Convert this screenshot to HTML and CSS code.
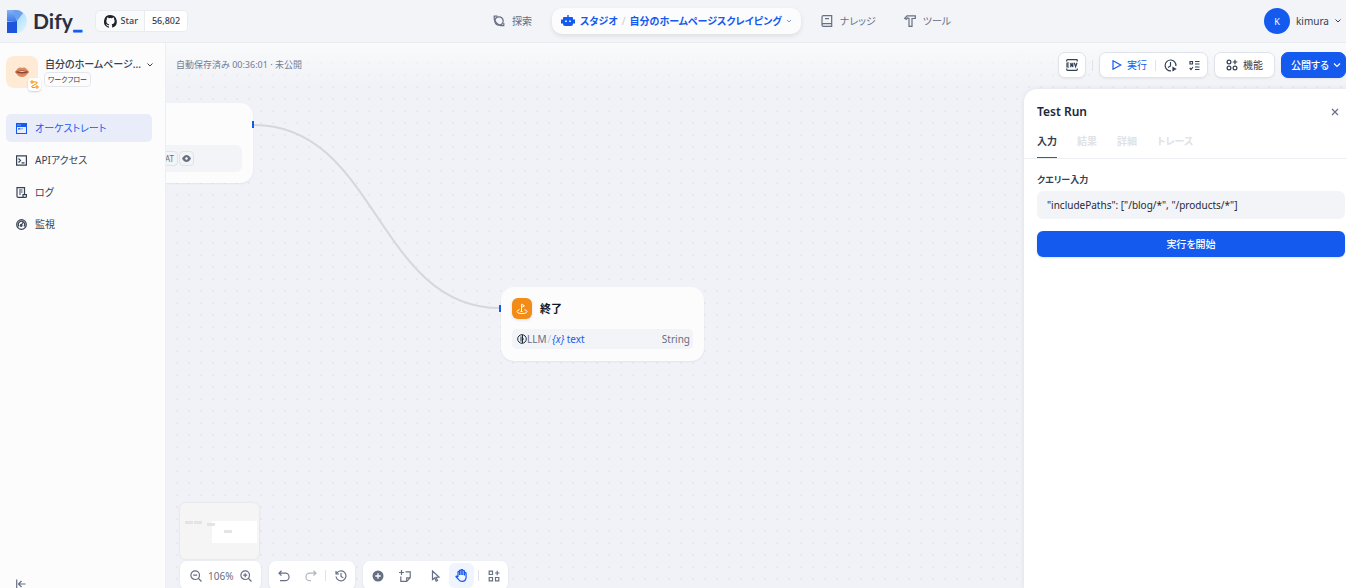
FILE: index.html
```html
<!DOCTYPE html>
<html lang="ja">
<head>
  <meta charset="UTF-8">
  <meta name="viewport" content="width=device-width, initial-scale=1">
  <title>自分のホームページスクレイピング - Dify</title>
  <link rel="stylesheet" href="styles.css">
</head>
<body>
  <header class="header">
    <div class="brand">
      <a class="logo" href="#">
        <svg width="21" height="24" viewBox="0 0 21 24">
          <defs>
            <linearGradient id="bar" x1="0" y1="0" x2="0" y2="1">
              <stop offset="0" stop-color="#86b4f5"/><stop offset="1" stop-color="#3f7ae8"/>
            </linearGradient>
            <linearGradient id="bowl" x1="0" y1="0" x2="1" y2="1">
              <stop offset="0" stop-color="#5f93ee"/><stop offset=".5" stop-color="#b5e3fb"/><stop offset="1" stop-color="#e8f7fc"/>
            </linearGradient>
          </defs>
          <path d="M0 1h9a11 11.500 0 0 1 0 23H0z" fill="url(#bowl)"/>
          <path d="M0 1h6l4 11H0z" fill="url(#bar)"/>
          <path d="M6 1h3q4 0 7 3l-6 8z" fill="#6a9ff0"/>
          <path d="M0 13l10-1v12H0z" fill="#1c55dc"/>
        </svg>
        <span class="logo-text">Dify<b>_</b></span>
      </a>
      <a class="github" href="#">
        <span class="github-star">
          <svg width="13" height="13" viewBox="0 0 16 16" fill="#1f2329"><path d="M8 0a8 8 0 0 0-2.500 15.600c.4.100.5-.2.500-.4v-1.500c-2.200.5-2.700-1-2.700-1-.4-.9-.9-1.200-.9-1.200-.7-.5.1-.5.1-.5.8.1 1.200.8 1.200.8.7 1.200 1.900.9 2.300.7.1-.5.3-.9.500-1.100-1.800-.2-3.600-.9-3.600-4 0-.9.300-1.600.8-2.100-.1-.2-.4-1 .1-2.100 0 0 .7-.2 2.200.8a7.500 7.500 0 0 1 4 0c1.500-1 2.200-.8 2.200-.8.4 1.100.2 1.900.1 2.100.5.600.8 1.300.8 2.100 0 3.100-1.900 3.800-3.700 4 .3.300.6.800.6 1.500v2.200c0 .2.100.5.500.4A8 8 0 0 0 8 0z"/></svg>
          Star
        </span>
        <span class="github-count">56,802</span>
      </a>
    </div>

    <nav class="main-nav">
      <a class="nav-item" href="#">
        <svg class="icon" width="12" height="12" viewBox="0 0 12 12"><circle cx="6" cy="6" r="4.200"/><path d="M4.500 1.200H1.200V4Q2.500 8.500 7.800 10.700h3V8"/></svg>
        探索
      </a>
      <div class="nav-pill">
        <a class="nav-link" href="#">
          <svg width="14" height="12" viewBox="0 0 14 12" fill="#155aef"><path d="M6.300 0h1.400v2H11q1 0 1 1v1.500h2v4h-2V9q0 2-2 2H4q-2 0-2-2v-.5H0v-4h2V3q0-1 1-1h3.300z"/><path d="M4.200 5.500h1.600V7H4.200zM8.200 5.500h1.600V7H8.200z" fill="#fff"/></svg>
          スタジオ
        </a>
        <span class="slash">/</span>
        <button class="app-switch" type="button">自分のホームページスクレイピング
          <svg class="icon" width="6" height="6" viewBox="0 0 6 6"><path d="M1 2l2 2 2-2"/></svg>
        </button>
      </div>
      <a class="nav-item" href="#">
        <svg class="icon" width="12" height="12" viewBox="0 0 12 12"><path d="M1 10V2q0-1.400 1.400-1.400h8.300v10.800H2.400Q1 11.400 1 10t1.400-1.400h8.300M4 3.700h4"/></svg>
        ナレッジ
      </a>
      <a class="nav-item" href="#">
        <svg class="icon" width="12" height="12" viewBox="0 0 12 12"><path d="M.7 3.500L3 .8h8.300v2.700H8v7.800H5V3.500L3.500 3 2.300 4.200z"/></svg>
        ツール
      </a>
    </nav>

    <button class="user" type="button">
      <span class="avatar">K</span>
      kimura
      <svg class="icon" width="6" height="6" viewBox="0 0 6 6"><path d="M.5 1.500L3 4l2.500-2.500"/></svg>
    </button>
  </header>

  <div class="layout">
    <aside class="sidebar">
      <div class="app">
        <div class="app-icon">
          <svg width="16" height="12" viewBox="0 0 16 12"><path d="M1 6Q4 1 6.500 1.500q1.500.8 3 0Q12 1 15 6q-3 5-7 5T1 6z" fill="#dd8a60"/><path d="M1 6q4-2 7-1.500Q11 4 15 6q-4 1.500-7 1.500T1 6z" fill="#8a463c"/><path d="M3.500 5.500q4.500-1.200 9 0-4.500.8-9 0z" fill="#e8e4e8"/></svg>
          <span class="app-badge">
            <svg width="9" height="9" viewBox="0 0 9 9" fill="none" stroke="#f79009"><path d="M1 1h2v2H1zM6 6h2v2H6zM3 2h3q2 0 1 1.500L2 6q-1 1.500 1 1.500h2"/></svg>
          </span>
        </div>
        <div class="app-info">
          <div class="app-name">自分のホームページ...</div>
          <span class="app-type">ワークフロー</span>
        </div>
        <svg class="icon app-arrow" width="6" height="6" viewBox="0 0 6 6"><path d="M.5 1.500L3 4l2.500-2.500"/></svg>
      </div>

      <nav class="side-nav">
        <a class="side-link active" href="#">
          <svg width="11" height="11" viewBox="0 0 11 11"><path fill="#155aef" fill-rule="evenodd" d="M0 0h11v11H0zM1 4v6h9V4zM1.500 1.500v1h1v-1zM3.500 1.500v1h1v-1z"/><path fill="#155aef" d="M2 5.200h2.500v1.200H2zM5.500 5.200h1v1h-1z"/></svg>
          オーケストレート
        </a>
        <a class="side-link" href="#">
          <svg class="icon" width="11" height="11" viewBox="0 0 11 11"><path d="M.6.8h9.800v9.400H.6zM2.500 3.500l2 2-2 2M5.500 7.800h3"/></svg>
          APIアクセス
        </a>
        <a class="side-link" href="#">
          <svg class="icon" width="11" height="11" viewBox="0 0 11 11"><path d="M1 .6h7.500v7h2v1.600q0 1.200-1.200 1.200H2.200Q1 10.400 1 9.200zM8.500 7.600H7v1.600q0 1.200 1.200 1.200M3 3h3.500M3 5h3.500M3 7h2"/></svg>
          ログ
        </a>
        <a class="side-link" href="#">
          <svg class="icon" width="11" height="11" viewBox="0 0 11 11"><circle cx="5.500" cy="5.500" r="4.800"/><path d="M3 7.500a3.200 3.200 0 1 1 5 0M5 6.500l2-3"/><circle cx="5.200" cy="6.500" r=".8"/></svg>
          監視
        </a>
      </nav>

      <button class="collapse" type="button" aria-label="サイドバーを閉じる">
        <svg class="icon" width="10" height="10" viewBox="0 0 10 10"><path d="M.7.500v9M9.500 5H2.500M5.500 2l-3 3 3 3"/></svg>
      </button>
    </aside>

    <main class="canvas">
      <svg class="edges" width="100%" height="100%"><path d="M88 82C211 82 211 265 334 265"/></svg>

      <section class="node node-llm">
        <div class="model">
          <span class="tag">CHAT</span>
          <span class="tag tag-icon"><svg width="9" height="7" viewBox="0 0 9 7"><path d="M0 3.500Q2 0 4.500 0T9 3.500Q7 7 4.500 7T0 3.500z" fill="#676f83"/><circle cx="4.500" cy="3.500" r="1.200" fill="#fff"/></svg></span>
        </div>
        <i class="port port-out"></i>
      </section>

      <section class="node node-end">
        <i class="port port-in"></i>
        <div class="node-title">
          <span class="node-icon">
            <svg width="12" height="12" viewBox="0 0 12 12" fill="none" stroke="#fff"><path d="M5.500 8.500V1.200l3 1.600-3 1.700M3.500 6.600Q1 7.200 1 8.600q0 2 5 2t5-2q0-1.400-2.700-2"/><path d="M4.500 8.500h2"/></svg>
          </span>
          終了
        </div>
        <div class="variable">
          <svg width="10" height="10" viewBox="0 0 10 10" fill="none" stroke="#1d2939"><circle cx="5" cy="5" r="4.300"/><path d="M4 2.500v5M5.500 1v8M5.500 5H7"/></svg>
          <span>LLM</span><span class="slash">/</span>
          <span class="var-name"><i>{x}</i> text</span>
          <span class="var-type">String</span>
        </div>
      </section>

      <div class="top-bar">
        <span class="saved">自動保存済み 00:36:01 · 未公開</span>
        <div class="actions">
          <button class="btn btn-env" type="button" aria-label="環境変数">
            <svg class="icon" width="12" height="12" viewBox="0 0 12 12"><path d="M.7 2.500V1.500Q.7.700 1.500.7h9q.8 0 .8.800v1M.7 9.500v1q0 .8.800.8h9q.8 0 .8-.8v-1M3.200 4H1v4h2.200M1 6h2M4.800 8.300V4l2 4V3.700M8.300 3.700l1.300 4 1.400-4"/></svg>
          </button>
          <span class="divider"></span>
          <div class="btn-group">
            <button class="run" type="button">
              <svg class="icon" width="10" height="10" viewBox="0 0 10 10"><path d="M1 .8v8.400L8.800 5z"/></svg>
              実行
            </button>
            <span class="divider"></span>
            <button class="icon-btn" type="button" aria-label="実行履歴">
              <svg class="icon" width="13" height="13" viewBox="0 0 13 13"><path d="M7 11.800A5.400 5.400 0 1 1 11.900 7M6.500 3v4L4 8.500"/><path d="M9 8.500v3l2.500-1.500z" fill="currentColor"/></svg>
            </button>
            <button class="icon-btn" type="button" aria-label="チェックリスト">
              <svg class="icon" width="11" height="11" viewBox="0 0 11 11"><path d="M1 1.500h2.500V4H1zM6 1.500h4.500M6 4h4.500M.7 8l1.300 1.500L4 7M6 7h4.500M6 9.500h4.500"/></svg>
            </button>
          </div>
          <button class="btn" type="button">
            <svg class="icon" width="12" height="12" viewBox="0 0 12 12"><circle cx="3" cy="3" r="1.900"/><circle cx="3" cy="9" r="1.900"/><circle cx="9" cy="9" r="1.900"/><path d="M9 .7v4.600M6.700 3h4.600"/></svg>
            機能
          </button>
          <button class="btn btn-primary" type="button">公開する
            <svg class="icon" width="8" height="8" viewBox="0 0 8 8"><path d="M1 2.500l3 3 3-3"/></svg>
          </button>
        </div>
      </div>

      <section class="panel">
        <div class="panel-head">
          <h2>Test Run</h2>
          <button class="icon-btn" type="button" aria-label="閉じる">
            <svg class="icon" width="8" height="8" viewBox="0 0 8 8"><path d="M1 1l6 6M7 1L1 7"/></svg>
          </button>
        </div>
        <div class="tabs">
          <button class="tab active" type="button">入力</button>
          <button class="tab" type="button" disabled>結果</button>
          <button class="tab" type="button" disabled>詳細</button>
          <button class="tab" type="button" disabled>トレース</button>
        </div>
        <form class="run-form">
          <label for="query">クエリー入力</label>
          <input id="query" type="text" value='"includePaths": ["/blog/*", "/products/*"]'>
          <button class="start" type="button">実行を開始</button>
        </form>
      </section>

      <div class="controls">
        <div class="zoom-col">
          <svg class="minimap" width="79" height="56" viewBox="0 0 79 56">
            <path d="M32 18h45v22H32z" fill="#fff"/>
            <path d="M5 18h8v3H5zM14 18h8v3h-8zM27 20h8v3h-8zM44 27h8v3h-8z" fill="#e4e4e7"/>
          </svg>
          <div class="tools zoom">
            <button class="icon-btn" type="button" aria-label="縮小">
              <svg class="icon" width="12" height="12" viewBox="0 0 12 12"><circle cx="5.200" cy="5.200" r="4.300"/><path d="M8.500 8.500l3 3M3.200 5.200h4"/></svg>
            </button>
            <span>106%</span>
            <button class="icon-btn" type="button" aria-label="拡大">
              <svg class="icon" width="12" height="12" viewBox="0 0 12 12"><circle cx="5.200" cy="5.200" r="4.300"/><path d="M8.500 8.500l3 3M3.200 5.200h4M5.200 3.200v4"/></svg>
            </button>
          </div>
        </div>
        <div class="tools">
          <button class="icon-btn" type="button" aria-label="元に戻す">
            <svg class="icon" width="12" height="12" viewBox="0 0 12 12"><path d="M3.500.800L1 3.200l2.500 2.500M1 3.200h6.300a3.700 3.700 0 0 1 0 7.500H2"/></svg>
          </button>
          <button class="icon-btn faded" type="button" aria-label="やり直し">
            <svg class="icon" width="12" height="12" viewBox="0 0 12 12"><path d="M8.500.800L11 3.200 8.500 5.700M11 3.200H4.700a3.700 3.700 0 0 0 0 7.500H6"/></svg>
          </button>
          <span class="divider"></span>
          <button class="icon-btn" type="button" aria-label="変更履歴">
            <svg class="icon" width="12" height="12" viewBox="0 0 12 12"><path d="M1 1v3h3M1.300 4A5 5 0 1 1 1 6.500M6 3v3.500l2.300 1.200"/></svg>
          </button>
        </div>
        <div class="tools">
          <button class="icon-btn" type="button" aria-label="ノードを追加">
            <svg width="12" height="12" viewBox="0 0 12 12"><circle cx="6" cy="6" r="5.500" fill="#676f83"/><path d="M6 3.300v5.400M3.300 6h5.400" stroke="#fff" stroke-width="1.300"/></svg>
          </button>
          <button class="icon-btn" type="button" aria-label="メモを追加">
            <svg class="icon" width="12" height="12" viewBox="0 0 12 12"><path d="M2.500 0v5M0 2.500h5M6.500 1.800h4.700v6l-3.500 3.500H1.800V6.500M7.700 11.300V7.800h3.500"/></svg>
          </button>
          <div class="modes">
            <button class="icon-btn" type="button" aria-label="ポインターモード">
              <svg class="icon" width="12" height="12" viewBox="0 0 12 12"><path d="M3.500 1l6.500 6-3 .3 1.500 3.200-1.300.7-1.500-3.300-2.200 1.600z"/></svg>
            </button>
            <button class="icon-btn selected" type="button" aria-label="ハンドモード">
              <svg class="icon" width="13" height="13" viewBox="0 0 13 13"><path d="M3 8V3.200q0-.8.800-.8t.8.800V6 1.800Q4.600 1 5.400 1t.8.800V6 1.300q0-.8.800-.8t.8.800V6 2.300q0-.8.900-.8t.8.800V6.500 4.500q0-.8.800-.8t.8.800V8q0 4.300-4 4.300-2.300 0-3.300-1.600L1 7.700q.2-1.400 2 .3"/></svg>
            </button>
          </div>
          <span class="divider"></span>
          <button class="icon-btn" type="button" aria-label="ノードを整理">
            <svg class="icon" width="12" height="12" viewBox="0 0 12 12"><path d="M1.200 1.200h3.300v3.300H1.200zM1.200 7.500h3.300v3.300H1.200zM7.500 7.500h3.300v3.300H7.500zM9.200.700v4.600M7 3h4.500"/></svg>
          </button>
        </div>
      </div>
    </main>
  </div>
</body>
</html>
```

FILE: styles.css
```css
* {
  box-sizing: border-box;
}

body {
  margin: 0;
  height: 100vh;
  display: flex;
  flex-direction: column;
  overflow: hidden;
  background: #f2f4f7;
  color: #354052;
  font-family: "Noto Sans", "Noto Sans CJK JP", sans-serif;
  font-size: 10px;
  line-height: 16px;
  font-feature-settings: "palt";
}

a {
  color: inherit;
  text-decoration: none;
}

button {
  display: flex;
  align-items: center;
  justify-content: center;
  padding: 0;
  border: none;
  background: none;
  color: inherit;
  font: inherit;
  font-feature-settings: inherit;
  white-space: nowrap;
  cursor: pointer;
}

svg {
  flex: none;
}

.icon {
  fill: none;
  stroke: currentColor;
  stroke-width: 1.2;
}

/* header */
.header {
  display: flex;
  align-items: center;
  justify-content: space-between;
  height: 43px;
  padding: 0 5px 0 7px;
  border-bottom: 1px solid #eaecf0;
}

.brand,
.logo,
.github,
.github-star,
.main-nav,
.nav-item,
.nav-pill,
.nav-link {
  display: flex;
  align-items: center;
}

.brand {
  gap: 12px;
}

.logo {
  gap: 5px;
}

.logo-text {
  color: #2b2f42;
  font-family: Lato, sans-serif;
  font-size: 21px;
  font-weight: 700;
  line-height: 24px;
}

.logo-text b {
  color: #155aef;
  font-weight: 900;
  -webkit-text-stroke: 1px #155aef;
}

.github {
  height: 22px;
  border: 1px solid #e9ebf0;
  border-radius: 5px;
  background: #f9fafb;
  font-size: 9px;
  font-weight: 500;
  overflow: hidden;
}

.github-star {
  gap: 4px;
  padding: 0 6px 0 8px;
}

.github-count {
  padding: 2px 7px;
  border-left: 1px solid #e9ebf0;
  background: #fff;
}

.main-nav {
  gap: 20px;
  margin-right: 8px;
  color: #676f83;
}

.nav-item {
  gap: 7px;
}

.nav-item:last-child {
  margin-left: 8px;
}

.nav-pill {
  height: 26px;
  padding: 0 9px;
  border-radius: 10px;
  background: #fcfcfd;
  box-shadow: 0 2px 5px #10182818;
  color: #155aef;
  font-weight: 600;
}

.nav-link {
  gap: 5px;
}

.slash {
  margin: 0 4px;
  color: #c4c9d4;
  font-weight: 400;
}

.app-switch {
  gap: 4px;
}

.nav-pill .icon,
.user .icon,
.app-arrow {
  stroke-width: 1;
}

.nav-pill .icon {
  opacity: .6;
}

.user {
  gap: 6px;
}

.avatar {
  width: 26px;
  height: 26px;
  border-radius: 50%;
  background: #155aef;
  color: #fff;
  font-size: 9px;
  line-height: 28px;
}

/* sidebar */
.layout {
  display: flex;
  flex: 1;
  min-height: 0;
}

.sidebar {
  display: flex;
  flex-direction: column;
  flex: none;
  width: 166px;
  padding: 13px 13px 0 6px;
  border-right: 1px solid #eceef2;
  background: #fcfcfd;
}

.app {
  display: flex;
  gap: 6px;
}

.app-icon {
  position: relative;
  display: flex;
  flex: none;
  align-items: center;
  justify-content: center;
  width: 32px;
  height: 32px;
  border-radius: 8px;
  background: #ffead5;
}

.app-badge {
  position: absolute;
  right: -3px;
  bottom: -3px;
  display: flex;
  padding: 2px;
  border-radius: 4px;
  background: #fff;
  box-shadow: 0 1px 2px #10182830;
}

.app-name {
  padding-left: 1px;
  font-weight: 500;
  white-space: nowrap;
}

.app-type {
  display: block;
  width: fit-content;
  padding: 0 3px;
  border: 1px solid #e4e7ec;
  border-radius: 4px;
  font-size: 7px;
  line-height: 13px;
}

.app-arrow {
  margin-top: 6px;
}

.side-nav {
  display: flex;
  flex-direction: column;
  gap: 4px;
  margin-top: 26px;
}

.side-link {
  display: flex;
  align-items: center;
  gap: 8px;
  height: 28px;
  padding: 0 10px;
  border-radius: 5px;
}

.side-link.active {
  background: #e9edfa;
  color: #155aef;
}

.collapse {
  margin: auto 0 -1px 10px;
  width: 10px;
  color: #676f83;
}

/* canvas */
.canvas {
  position: relative;
  flex: 1;
  overflow: hidden;
  background: radial-gradient(circle at 11px 8px, #e7e9ef 1px, transparent 1px) 0 0 / 12px 12px #f0f2f7;
}

.edges {
  position: absolute;
  inset: 0;
  fill: none;
  stroke: #d4d7de;
  stroke-width: 2;
}

.node {
  position: absolute;
  width: 203px;
  padding: 11px 11px 12px;
  border-radius: 13px;
  background: #fcfcfd;
  box-shadow: 0 1px 2px #10182810;
}

.node-llm {
  left: -116px;
  top: 60px;
  padding: 42px 11px 11px;
}

.node-end {
  left: 335px;
  top: 244px;
}

.model {
  display: flex;
  justify-content: flex-end;
  gap: 1px;
  height: 27px;
  padding: 6px 48px 6px 0;
  border-radius: 6px;
  background: #f2f4f7;
}

.tag {
  display: flex;
  align-items: center;
  padding: 0 3px;
  border: 1px solid #e0e3e9;
  border-radius: 4px;
  color: #676f83;
  font-size: 8px;
}

.tag-icon {
  padding: 0 2px;
}

.port {
  position: absolute;
  width: 2px;
  height: 7px;
  background: #155aef;
}

.port-out {
  right: -1px;
  top: 18px;
}

.port-in {
  left: -2px;
  top: 18px;
}

.node-title {
  display: flex;
  align-items: center;
  gap: 8px;
  color: #101828;
  font-size: 11px;
  font-weight: 600;
}

.node-icon {
  display: flex;
  align-items: center;
  justify-content: center;
  width: 20px;
  height: 21px;
  border-radius: 6px;
  background: #f38b16;
  box-shadow: 0 1px 3px #10182820;
}

.variable {
  display: flex;
  align-items: center;
  height: 20px;
  margin-top: 10px;
  padding: 0 3px 0 5px;
  border-radius: 5px;
  background: #f2f4f7;
  color: #676f83;
}

.variable .slash {
  margin: 0 1px;
}

.var-name {
  color: #155aef;
}

.var-type {
  margin-left: auto;
}

.top-bar {
  position: absolute;
  inset: 0 0 auto;
  display: flex;
  align-items: center;
  justify-content: space-between;
  height: 44px;
  padding-left: 10px;
  background: linear-gradient(#f9fafb, #f9fafb00);
}

.saved {
  color: #737b92;
  font-size: 9px;
}

.actions {
  display: flex;
  align-items: center;
  gap: 6px;
}

.btn,
.btn-group {
  display: flex;
  align-items: center;
  gap: 5px;
  height: 26px;
  padding: 0 11px;
  border: 1px solid #e0e3e9;
  border-radius: 7px;
  background: #fff;
  box-shadow: 0 1px 2px #1018280d;
}

.btn-env {
  padding: 0 7px;
}

.btn-group {
  gap: 8px;
  padding: 0 7px 0 12px;
}

.run {
  gap: 5px;
  color: #155aef;
}

.divider {
  width: 1px;
  height: 11px;
  background: #e0e3e9;
}

.icon-btn + .icon-btn {
  margin-left: 4px;
}

.btn-primary {
  gap: 4px;
  padding: 0 4px 0 9px;
  border-color: #155aef;
  background: #155aef;
  color: #fff;
  font-weight: 500;
}

/* test run panel */
.panel {
  position: absolute;
  inset: 46px 0 0 auto;
  width: 322px;
  border-radius: 13px 0 0 0;
  background: #fff;
  box-shadow: 0 0 5px #10182814;
}

.panel-head {
  display: flex;
  align-items: center;
  justify-content: space-between;
  padding: 15px 7px 10px 13px;
  color: #676f83;
}

.panel-head h2 {
  margin: 0;
  color: #1d2939;
  font-size: 12px;
  font-weight: 600;
  line-height: 16px;
}

.tabs {
  display: flex;
  gap: 20px;
  padding-left: 13px;
  border-bottom: 1px solid #eceef2;
  font-weight: 600;
}

.tab {
  height: 28px;
  padding-bottom: 5px;
  border-bottom: 1px solid transparent;
}

.tab:disabled {
  color: #e0e2e7;
  cursor: default;
}

.tab.active {
  border-color: #155aef;
}

.run-form {
  display: flex;
  flex-direction: column;
  padding: 13px 1px 0 13px;
}

.run-form label {
  margin-bottom: 3px;
  font-size: 9px;
  font-weight: 600;
}

.run-form input {
  height: 28px;
  padding: 0 10px;
  border: none;
  border-radius: 6px;
  background: #f2f4f7;
  color: #1d2939;
  font: 10px "Noto Sans", sans-serif;
}

.start {
  height: 26px;
  margin-top: 12px;
  border-radius: 6px;
  background: #155aef;
  box-shadow: 0 1px 2px #10182820;
  color: #fff;
  font-weight: 500;
}

/* bottom controls */
.controls {
  position: absolute;
  left: 14px;
  bottom: -2px;
  display: flex;
  align-items: flex-end;
  gap: 8px;
  color: #676f83;
}

.minimap {
  display: block;
  margin-bottom: 2px;
  border-radius: 6px;
  background: #f5f5f5;
  box-shadow: 0 0 3px #10182818;
}

.tools {
  display: flex;
  align-items: center;
  gap: 2px;
  height: 29px;
  padding: 0 2px;
  border-radius: 7px;
  background: #fff;
  box-shadow: 0 1px 3px #10182812;
}

.tools .icon-btn {
  width: 25px;
  height: 25px;
  margin: 0;
  border-radius: 6px;
}

.modes {
  display: flex;
  gap: 2px;
  margin: 0 2px 0 3px;
}

.zoom {
  gap: 0;
  padding: 0 3px;
}

.faded {
  opacity: .5;
}

.tools .selected {
  background: #eff4ff;
  color: #155aef;
}
```
